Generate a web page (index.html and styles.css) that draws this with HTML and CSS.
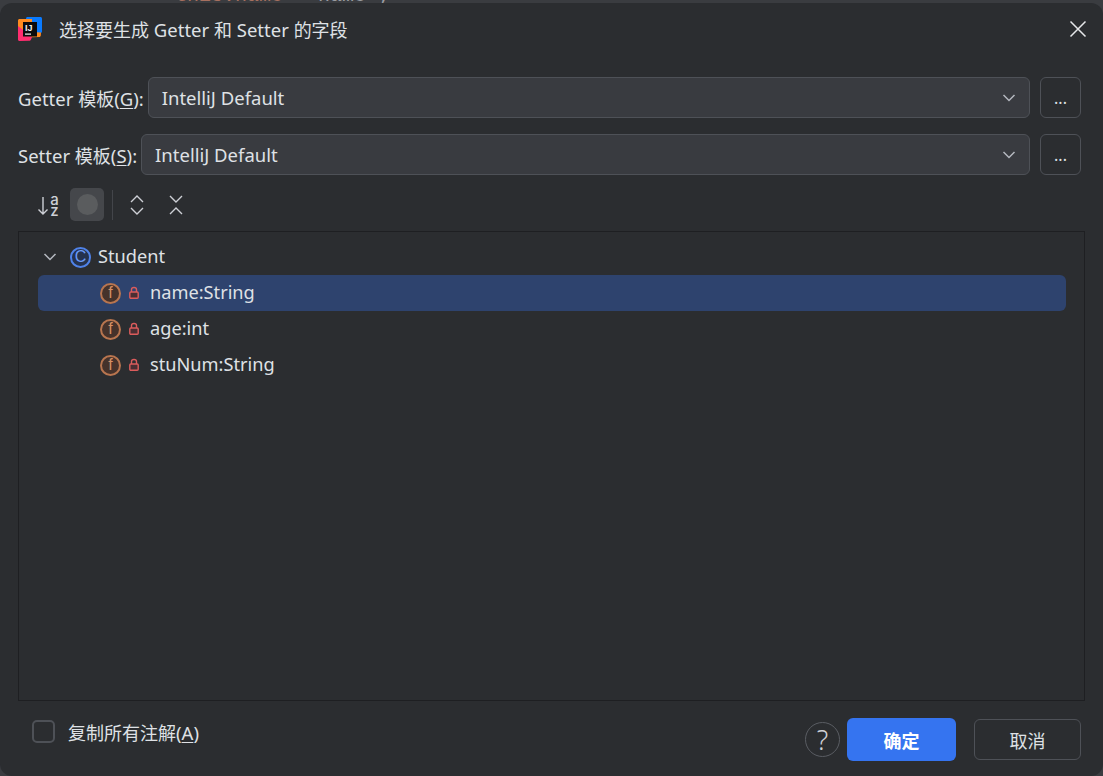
FILE: index.html
```html
<!DOCTYPE html>
<html lang="zh-CN">
<head>
    <meta charset="UTF-8">
    <meta name="viewport" content="width=device-width, initial-scale=1.0">
    <title>选择要生成 Getter 和 Setter 的字段</title>
    <link rel="stylesheet" href="styles.css">
</head>
<body>
    <div class="backdrop"><span class="bd-field">this.name</span><span class="bd-value">name ;</span></div>

    <div class="dialog">
        <div class="title-bar">
            <svg class="logo" width="24" height="24" viewBox="0 0 24 24">
                <path d="M8 1.5C8 .7 8.700 0 9.500 0H22.500C23.300 0 24 .7 24 1.500V14.500C24 15.300 23.300 16 22.500 16H8Z" fill="#0a7bff"/>
                <path d="M1.500 2H14V15L23 15.500 22.800 18.500C22.700 19.300 22 20 21.200 20L8 20.500 0 14V3.500C0 2.700 .7 2 1.500 2Z" fill="#ff8a1f"/>
                <path d="M0 9L14 20 13 22.500C12.700 23.300 12 23.800 11.200 23.800L1.500 24C.7 24 0 23.300 0 22.500Z" fill="#ff2d6f"/>
                <rect x="5" y="5" width="14" height="14.500" fill="#0b0b0d"/>
                <rect x="7" y="16.500" width="6" height="1.200" fill="#f2f2f2"/>
                <text x="7" y="13.500" class="logo-text">IJ</text>
            </svg>
            <span class="title-text"><span class="zh">选择要生成</span> Getter <span class="zh">和</span> Setter <span class="zh">的字段</span></span>
            <svg class="close" width="18" height="18" viewBox="0 0 18 18">
                <path d="M1.500 1.500L16.500 16.500M16.500 1.500L1.500 16.500" stroke="#e6e7ea" stroke-width="1.500" fill="none"/>
            </svg>
        </div>

        <div class="template-row">
            <label class="template-label">Getter <span class="zh">模板</span>(<u>G</u>):</label>
            <div class="combo">
                <span>IntelliJ Default</span>
                <svg width="14" height="8" viewBox="0 0 14 8"><path d="M1.500 1L7 6.500 12.500 1" class="chev"/></svg>
            </div>
            <button class="more">...</button>
        </div>
        <div class="template-row">
            <label class="template-label">Setter <span class="zh">模板</span>(<u>S</u>):</label>
            <div class="combo">
                <span>IntelliJ Default</span>
                <svg width="14" height="8" viewBox="0 0 14 8"><path d="M1.500 1L7 6.500 12.500 1" class="chev"/></svg>
            </div>
            <button class="more">...</button>
        </div>

        <div class="toolbar">
            <div class="tool">
                <svg width="12" height="24" viewBox="0 0 12 24">
                    <path d="M6 4V21M1.500 16.500L6 21 10.500 16.500" class="tool-line"/>
                </svg>
                <div class="sort-letters"><span>a</span><span>z</span></div>
            </div>
            <div class="tool active"><span class="dot"></span></div>
            <div class="tool-sep"></div>
            <div class="tool">
                <svg width="18" height="24" viewBox="0 0 18 24">
                    <path d="M3 9L9 3 15 9M3 15L9 21 15 15" class="tool-line"/>
                </svg>
            </div>
            <div class="tool">
                <svg width="18" height="24" viewBox="0 0 18 24">
                    <path d="M3 3L9 9 15 3M3 21L9 15 15 21" class="tool-line"/>
                </svg>
            </div>
        </div>

        <div class="tree">
            <div class="tree-row root">
                <svg class="twisty" width="14" height="8" viewBox="0 0 14 8"><path d="M1.500 1L7 6.500 12.500 1" class="chev"/></svg>
                <span class="badge badge-class">C</span>
                <span class="node-text">Student</span>
            </div>
            <div class="tree-row field selected">
                <span class="badge badge-field">f</span>
                <svg class="lock" width="12" height="14" viewBox="0 0 12 14"><path d="M3.500 6V3.500C3.500 .9 8.500 .9 8.500 3.500V6" class="lock-line"/><rect x="1.800" y="6" width="8.400" height="6.200" rx="1" class="lock-line lock-body"/></svg>
                <span class="node-text">name:String</span>
            </div>
            <div class="tree-row field">
                <span class="badge badge-field">f</span>
                <svg class="lock" width="12" height="14" viewBox="0 0 12 14"><path d="M3.500 6V3.500C3.500 .9 8.500 .9 8.500 3.500V6" class="lock-line"/><rect x="1.800" y="6" width="8.400" height="6.200" rx="1" class="lock-line lock-body"/></svg>
                <span class="node-text">age:int</span>
            </div>
            <div class="tree-row field">
                <span class="badge badge-field">f</span>
                <svg class="lock" width="12" height="14" viewBox="0 0 12 14"><path d="M3.500 6V3.500C3.500 .9 8.500 .9 8.500 3.500V6" class="lock-line"/><rect x="1.800" y="6" width="8.400" height="6.200" rx="1" class="lock-line lock-body"/></svg>
                <span class="node-text">stuNum:String</span>
            </div>
        </div>

        <div class="footer">
            <label class="copy-check">
                <span class="checkbox"></span>
                <span><span class="zh">复制所有注解</span>(<u>A</u>)</span>
            </label>
            <div class="footer-buttons">
                <button class="help">?</button>
                <button class="btn primary">确定</button>
                <button class="btn">取消</button>
            </div>
        </div>
    </div>
</body>
</html>
```

FILE: styles.css
```css
* { box-sizing: border-box; }
html, body { margin: 0; height: 100%; }
body { width: 1103px; height: 776px; overflow: hidden; background: #3a3c40; color: #dfe1e5; font-family: "Noto Sans", "Noto Sans CJK SC", sans-serif; font-size: 18.500px; position: relative; }
.zh { font-size: 18px; }
u { text-underline-offset: 2px; }
button { font-family: inherit; color: inherit; cursor: pointer; }

.backdrop { position: absolute; left: 0; top: -12px; height: 15px; width: 100%; font-family: "Liberation Mono", monospace; font-size: 20px; line-height: 15px; overflow: hidden; }
.bd-field { position: absolute; left: 175px; color: #a8705f; }
.bd-value { position: absolute; left: 318px; color: #9a9ca2; }

.dialog { position: absolute; left: 0; top: 3px; width: 1103px; height: 773px; background: #2b2d30; border-radius: 12px; display: flex; flex-direction: column; padding: 0 22px 0 18px; }

.title-bar { height: 52px; margin-bottom: 6px; display: flex; align-items: center; flex: none; }
.logo { flex: none; }
.logo-text { font-family: "Liberation Sans", sans-serif; font-size: 9px; font-weight: bold; fill: #f2f2f2; }
.title-text { margin-left: 17px; }
.close { margin-left: auto; margin-right: -6px; flex: none; }

.template-row { display: flex; align-items: center; height: 41px; margin-top: 16px; flex: none; }
.template-label { white-space: nowrap; margin-right: 4px; }
.combo { flex: 1; height: 41px; background: #393b40; border: 1px solid #4e5157; border-radius: 6px; display: flex; align-items: center; justify-content: space-between; padding: 0 13px; }
.chev { fill: none; stroke: #b4b8bf; stroke-width: 1.500; }
.more { width: 41px; height: 41px; margin-left: 10px; background: transparent; border: 1px solid #4e5157; border-radius: 6px; font-size: 16px; padding: 0; }

.toolbar { display: flex; align-items: center; height: 33px; margin-top: 13px; padding-left: 13px; flex: none; }
.tool { width: 34px; height: 33px; display: flex; align-items: center; justify-content: center; border-radius: 5px; margin-right: 5px; }
.tool.active { background: #45474b; margin-right: 8px; }
.dot { width: 21px; height: 21px; border-radius: 50%; background: #5a5c5e; }
.tool-sep { width: 1px; height: 30px; background: #43454a; margin-right: 7px; }
.tool-line { fill: none; stroke: #ced0d6; stroke-width: 1.400; }
.sort-letters { display: flex; flex-direction: column; font-family: Inter, sans-serif; font-size: 15px; font-weight: 500; line-height: 11px; color: #ced0d6; margin-left: 1px; }

.tree { width: 1067px; height: 470px; margin-top: 10px; background: #2b2d30; border: 1px solid #1e1f22; padding: 7px 18px 0 19px; flex: none; font-size: 18.200px; }
.tree-row { height: 36px; display: flex; align-items: center; border-radius: 6px; }
.node-text { padding-bottom: 2px; }
.root { padding-left: 5px; }
.twisty { flex: none; margin-right: 13px; }
.field { padding-left: 62px; }
.selected { background: #2e436e; }
.badge { width: 21px; height: 21px; border-radius: 50%; display: flex; align-items: center; justify-content: center; font-family: "Liberation Sans", sans-serif; font-size: 16px; flex: none; border: 2px solid; margin-right: 7px; }
.badge-class { background: #25324d; border-color: #4f82e8; color: #6b9bf8; }
.badge-field { background: #45322b; border-color: #b8754f; color: #d68f66; }
.lock { flex: none; margin-right: 10px; }
.lock-line { fill: none; stroke: #db5c5c; stroke-width: 1.400; }
.lock-body { fill: #4a2e33; }

.footer { display: flex; justify-content: space-between; align-items: center; height: 43px; margin-top: 17px; flex: none; }
.copy-check { display: flex; align-items: center; padding-left: 14px; position: relative; top: -8px; }
.checkbox { width: 23px; height: 23px; border: 2px solid #4e5157; border-radius: 5px; margin-right: 13px; }
.footer-buttons { display: flex; align-items: center; }
.help { width: 35px; height: 35px; border-radius: 50%; border: 1px solid #5a5d63; background: transparent; font-size: 27px; line-height: 1; padding: 0; margin-right: 7px; color: #ced0d6; font-weight: 300; }
.btn { width: 107px; height: 41px; background: transparent; border: 1px solid #4e5157; border-radius: 6px; font-size: 18px; padding: 0; }
.btn.primary { width: 109px; height: 43px; background: #3574f0; border: none; color: #fff; font-weight: bold; margin-right: 18px; }
```
